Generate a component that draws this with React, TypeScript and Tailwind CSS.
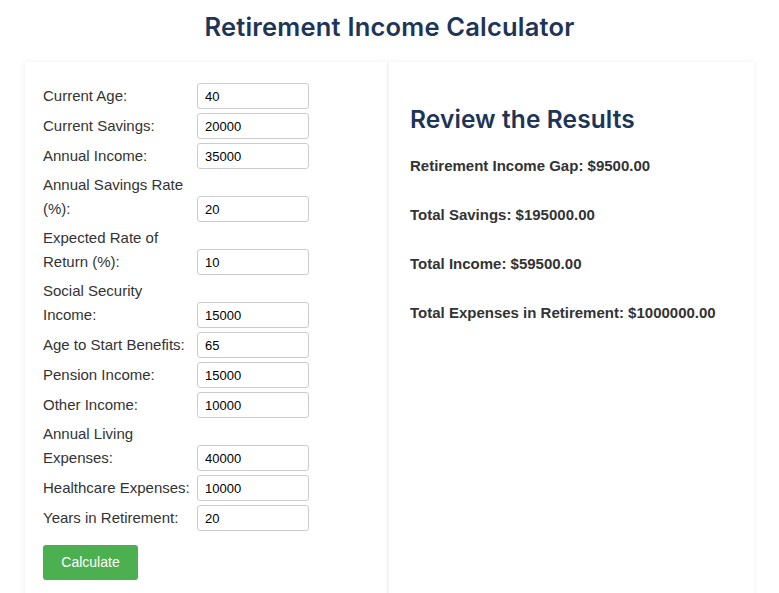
const fields = [
  { label: "Current Age:", value: "40" },
  { label: "Current Savings:", value: "20000" },
  { label: "Annual Income:", value: "35000" },
  { label: "Annual Savings Rate (%):", value: "20" },
  { label: "Expected Rate of Return (%):", value: "10" },
  { label: "Social Security Income:", value: "15000" },
  { label: "Age to Start Benefits:", value: "65" },
  { label: "Pension Income:", value: "15000" },
  { label: "Other Income:", value: "10000" },
  { label: "Annual Living Expenses:", value: "40000" },
  { label: "Healthcare Expenses:", value: "10000" },
  { label: "Years in Retirement:", value: "20" },
];

const results = [
  "Retirement Income Gap: $9500.00",
  "Total Savings: $195000.00",
  "Total Income: $59500.00",
  "Total Expenses in Retirement: $1000000.00",
];

const App = () => {
  return (
    <div className="min-h-screen bg-white font-['Liberation_Sans',Arial,sans-serif] text-[#333]">
      <h1 className="pt-[11px] text-center font-['Inter',sans-serif] text-[25.5px] font-semibold leading-[32px] tracking-[0.2px] text-[#1e3557]">
        Retirement Income Calculator
      </h1>

      <div className="mt-[19px] flex gap-[2px] px-[25px]">
        <div className="w-[362px] bg-white px-[18px] pb-6 pt-[21px] shadow-[0_0_6px_rgba(0,0,0,0.07)]">
          <form className="flex flex-col gap-[4px]" onSubmit={(e) => e.preventDefault()}>
            {fields.map((field) => (
              <div key={field.label} className="flex items-end">
                <label className="mb-[1px] w-[154px] text-[15px] leading-[24px] text-[#333]">
                  {field.label}
                </label>
                <input
                  type="text"
                  defaultValue={field.value}
                  className="h-[26px] w-[112px] rounded-[3px] border border-[#ccc] bg-white px-[7px] text-[13px] text-black outline-none"
                />
              </div>
            ))}
            <div className="mt-[10px]">
              <button
                type="submit"
                className="h-[35px] w-[95px] rounded-[3px] bg-[#4caf50] text-[14px] text-white"
              >
                Calculate
              </button>
            </div>
          </form>
        </div>

        <div className="w-[365px] bg-white px-[21px] pt-[41px] shadow-[0_0_6px_rgba(0,0,0,0.07)]">
          <h2 className="font-['Inter',sans-serif] text-[24.5px] font-semibold leading-[32px] tracking-[0.1px] text-[#1e3557]">
            Review the Results
          </h2>
          <div className="mt-[19px] flex flex-col gap-[25px]">
            {results.map((r) => (
              <p key={r} className="text-[15px] font-bold leading-[24px] text-[#333]">
                {r}
              </p>
            ))}
          </div>
        </div>
      </div>
    </div>
  );
};

export default App;
